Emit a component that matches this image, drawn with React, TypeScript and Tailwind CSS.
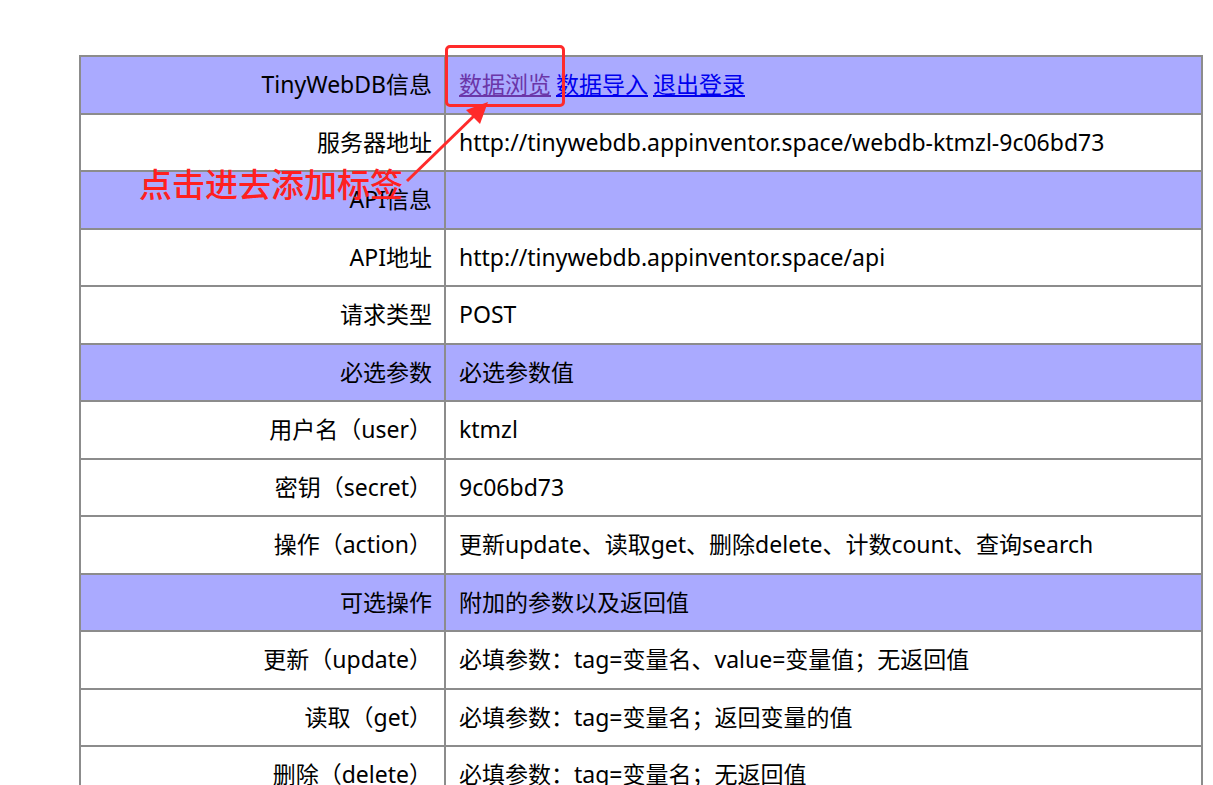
const rows: { k: string; v: React.ReactNode; head?: boolean }[] = [
  {
    k: "TinyWebDB信息",
    head: true,
    v: (
      <span className="flex gap-[5px]">
        <a href="#" className="text-[#6b36a8] underline">数据浏览</a>
        <a href="#" className="text-[#0000ee] underline">数据导入</a>
        <a href="#" className="text-[#0000ee] underline">退出登录</a>
      </span>
    ),
  },
  { k: "服务器地址", v: "http://tinywebdb.appinventor.space/webdb-ktmzl-9c06bd73" },
  { k: "API信息", v: "", head: true },
  { k: "API地址", v: "http://tinywebdb.appinventor.space/api" },
  { k: "请求类型", v: "POST" },
  { k: "必选参数", v: "必选参数值", head: true },
  { k: "用户名（user）", v: "ktmzl" },
  { k: "密钥（secret）", v: "9c06bd73" },
  { k: "操作（action）", v: "更新update、读取get、删除delete、计数count、查询search" },
  { k: "可选操作", v: "附加的参数以及返回值", head: true },
  { k: "更新（update）", v: "必填参数：tag=变量名、value=变量值；无返回值" },
  { k: "读取（get）", v: "必填参数：tag=变量名；返回变量的值" },
  { k: "删除（delete）", v: "必填参数：tag=变量名；无返回值" },
];

export default function App() {
  return (
    <div
      className="relative h-[785px] overflow-hidden bg-white pl-[79px] pt-[55px] text-[23px] text-black"
      style={{ fontFamily: '"Noto Sans", "Noto Sans CJK SC", sans-serif' }}
    >
      <table className="w-[1124px] border-collapse">
        <tbody>
          {rows.map((r, i) => (
            <tr key={i} className={r.head ? "h-[57.5px] bg-[#aaaaff]" : "h-[57.5px] bg-white"}>
              <td className="w-[365px] border-2 border-[#8c8c8c] pr-[12px] text-right leading-none whitespace-nowrap">
                {r.k}
              </td>
              <td className="border-2 border-[#8c8c8c] pl-[13px] leading-none whitespace-nowrap">{r.v}</td>
            </tr>
          ))}
        </tbody>
      </table>

      {/* 标注 */}
      <div className="absolute left-[445px] top-[45px] h-[62px] w-[120px] rounded-[5px] border-[3px] border-[#ff2a2a]" />
      <svg className="absolute left-0 top-0" width="1213" height="785">
        <line x1="407" y1="181" x2="476" y2="114" stroke="#ff2a2a" strokeWidth="3" />
        <polygon points="488,102 466,110 480,124" fill="#ff2a2a" />
      </svg>
      <div
        className="absolute left-[139px] top-[167px] text-[33px] font-medium leading-none text-[#ff2020]"
        style={{ fontFamily: '"Noto Sans CJK SC", sans-serif' }}
      >
        点击进去添加标签
      </div>
    </div>
  );
}
